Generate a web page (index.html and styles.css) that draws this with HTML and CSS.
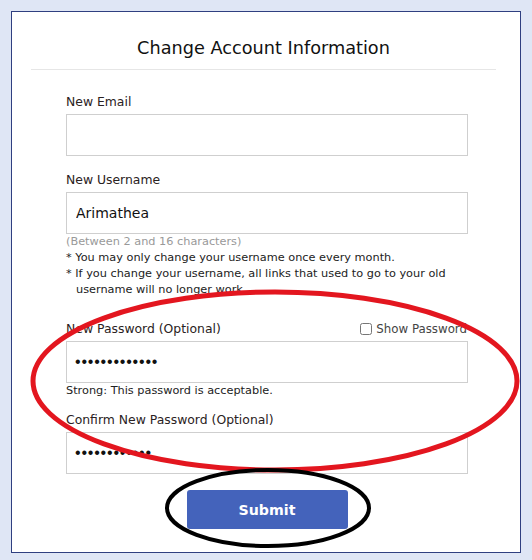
FILE: index.html
```html
<!DOCTYPE html>
<html lang="en">
<head>
    <meta charset="UTF-8">
    <title>Change Account Information</title>
    <link rel="stylesheet" href="styles.css">
</head>
<body>
    <div class="panel">
        <h1 class="panel-title">Change Account Information</h1>

        <form class="account-form">
            <div class="field">
                <label class="field-label" for="email">New Email</label>
                <input class="text-input" id="email" type="text">
            </div>

            <div class="field">
                <label class="field-label" for="username">New Username</label>
                <input class="text-input" id="username" type="text" value="Arimathea">
                <div class="hint muted">(Between 2 and 16 characters)</div>
                <ul class="notes">
                    <li>You may only change your username once every month.</li>
                    <li>If you change your username, all links that used to go to your old username will no longer work.</li>
                </ul>
            </div>

            <div class="field field-password">
                <div class="label-row">
                    <label class="field-label" for="password">New Password (Optional)</label>
                    <label class="show-toggle"><input type="checkbox"> Show Password</label>
                </div>
                <input class="text-input pw-input" id="password" type="password" value="abcdefghijklm">
                <div class="hint">Strong: This password is acceptable.</div>
            </div>

            <div class="field field-confirm">
                <label class="field-label" for="confirm">Confirm New Password (Optional)</label>
                <input class="text-input pw-input" id="confirm" type="password" value="abcdefghijkl">
            </div>

            <div class="actions">
                <button class="submit-btn" type="button">Submit</button>
            </div>
        </form>

        <!-- markup circles drawn over the form -->
        <svg class="marks" width="532" height="560" viewBox="0 0 532 560">
            <ellipse cx="275" cy="381" rx="242" ry="89" fill="none" stroke="#e3161f" stroke-width="5"/>
            <ellipse cx="268" cy="508" rx="101" ry="38" fill="none" stroke="#000" stroke-width="4"/>
        </svg>
    </div>
</body>
</html>
```

FILE: styles.css
```css
body {
    margin: 0;
    background-color: #dfe6f5;
    font-family: "DejaVu Sans", Verdana, sans-serif;
    color: #222;
}

.panel {
    width: 510px;
    height: 542px;
    margin: 11px 0 0 11px;
    background-color: #fff;
    border: 1.5px solid #2f3f80;
    box-sizing: border-box;
}

.panel-title {
    margin: 0 24px 0 19px;
    padding: 25px 0 10px;
    border-bottom: 1px solid #e6e6e6;
    font-size: 17.7px;
    font-weight: normal;
    line-height: 22px;
    text-align: center;
    color: #111;
}

.account-form {
    width: 402px;
    margin: 24px 0 0 54px;
}

.field {
    margin-bottom: 16px;
}

.field-label {
    display: block;
    font-size: 12.4px;
    line-height: 16px;
    margin-bottom: 4px;
    color: #2a2222;
}

.text-input {
    display: block;
    width: 100%;
    height: 42px;
    box-sizing: border-box;
    border: 1px solid #cfcfcf;
    padding: 0 9px;
    font-family: "DejaVu Sans", Verdana, sans-serif;
    font-size: 14px;
    color: #111;
    outline: none;
}

.pw-input {
    font-family: "Liberation Sans", Arial, sans-serif;
    font-size: 16px;
    letter-spacing: 0.8px;
    padding-left: 8px;
}

.hint {
    font-size: 11.3px;
    line-height: 16px;
}

.muted {
    color: #999;
}

.notes {
    margin: 0;
    padding: 0 0 0 10px;
    list-style: none;
    font-size: 11.3px;
    line-height: 16px;
}

.notes li {
    text-indent: -10px;
}

.notes li::before {
    content: "* ";
}

.field-password {
    margin-top: 23px;
    margin-bottom: 13px;
}

.label-row {
    display: flex;
    justify-content: space-between;
    align-items: flex-end;
}

.show-toggle {
    display: flex;
    align-items: center;
    gap: 4px;
    font-size: 11.8px;
    line-height: 16px;
    color: #444;
    margin: 0 1px 4px 0;
}

.show-toggle input {
    margin: 0;
    width: 12px;
    height: 12px;
}

.field-confirm {
    margin-bottom: 16px;
}

.actions {
    display: flex;
    justify-content: center;
}

.submit-btn {
    width: 161px;
    height: 39px;
    border: 0;
    border-radius: 3px;
    background-color: #4463bb;
    color: #fff;
    font-family: "DejaVu Sans", Verdana, sans-serif;
    font-size: 14.2px;
    font-weight: bold;
}

.marks {
    position: absolute;
    top: 0;
    left: 0;
    pointer-events: none;
}
```
